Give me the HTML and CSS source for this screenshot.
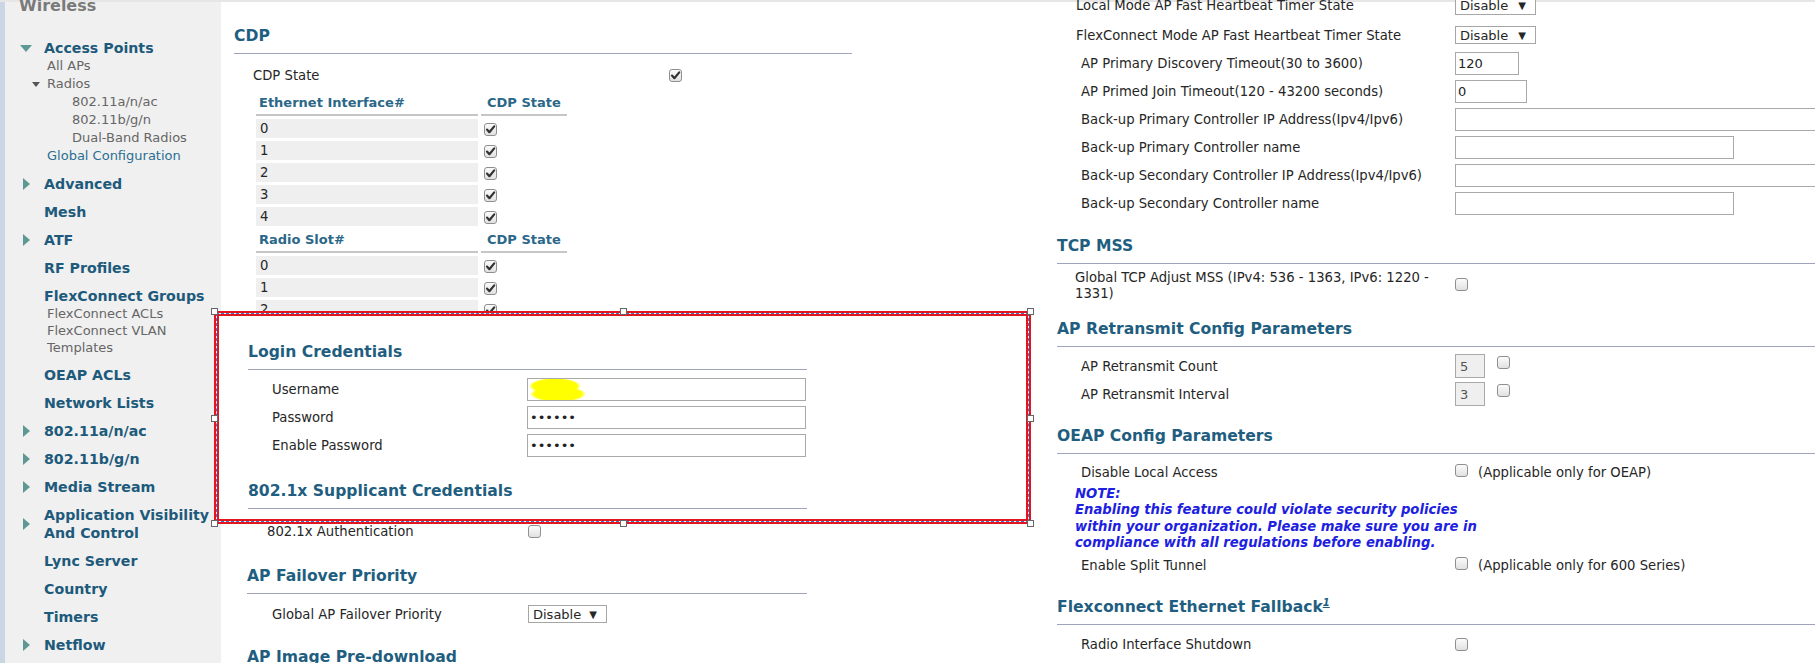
FILE: index.html
```html
<!DOCTYPE html>
<html lang="en">

<head>
    <meta charset="UTF-8">
    <meta name="viewport" content="width=device-width, initial-scale=1.0">
    <title>Wireless - Global Configuration</title>
    <link rel="stylesheet" href="styles.css">
</head>

<body>
    <div class="page">
        <div class="sidebar">
            <h2 class="side-title">Wireless</h2>
            <ul class="nav">
                <li>
                    <div class="nav-item"><span class="mk"><i class="tri-down"></i></span>Access Points</div>
                    <ul class="sub">
                        <li>All APs</li>
                        <li class="radios"><span class="mk-sm"><i class="tri-sm"></i></span>Radios</li>
                        <li class="deep">802.11a/n/ac</li>
                        <li class="deep">802.11b/g/n</li>
                        <li class="deep">Dual-Band Radios</li>
                        <li class="link">Global Configuration</li>
                    </ul>
                </li>
                <li><div class="nav-item"><span class="mk"><i class="tri-right"></i></span>Advanced</div></li>
                <li><div class="nav-item"><span class="mk"></span>Mesh</div></li>
                <li><div class="nav-item"><span class="mk"><i class="tri-right"></i></span>ATF</div></li>
                <li><div class="nav-item"><span class="mk"></span>RF Profiles</div></li>
                <li>
                    <div class="nav-item"><span class="mk"></span>FlexConnect Groups</div>
                    <ul class="sub tight">
                        <li>FlexConnect ACLs</li>
                        <li>FlexConnect VLAN<br>Templates</li>
                    </ul>
                </li>
                <li><div class="nav-item"><span class="mk"></span>OEAP ACLs</div></li>
                <li><div class="nav-item"><span class="mk"></span>Network Lists</div></li>
                <li><div class="nav-item"><span class="mk"><i class="tri-right"></i></span>802.11a/n/ac</div></li>
                <li><div class="nav-item"><span class="mk"><i class="tri-right"></i></span>802.11b/g/n</div></li>
                <li><div class="nav-item"><span class="mk"><i class="tri-right"></i></span>Media Stream</div></li>
                <li><div class="nav-item"><span class="mk"><i class="tri-right"></i></span>Application Visibility<br>And Control</div></li>
                <li><div class="nav-item"><span class="mk"></span>Lync Server</div></li>
                <li><div class="nav-item"><span class="mk"></span>Country</div></li>
                <li><div class="nav-item"><span class="mk"></span>Timers</div></li>
                <li><div class="nav-item"><span class="mk"><i class="tri-right"></i></span>Netflow</div></li>
            </ul>
        </div>

        <div class="main">
            <h3 class="sec-title cdp-title">CDP</h3>
            <div class="cdp-row">
                <span>CDP State</span>
                <span class="cb on"><svg viewBox="0 0 11 11"><path d="M2 5.6 L4.4 8.2 L9.2 2.4" /></svg></span>
            </div>
            <table class="cdp-table">
                <tr><th>Ethernet Interface#</th><th>CDP State</th></tr>
                <tr><td>0</td><td><span class="cb on"><svg viewBox="0 0 11 11"><path d="M2 5.6 L4.4 8.2 L9.2 2.4" /></svg></span></td></tr>
                <tr><td>1</td><td><span class="cb on"><svg viewBox="0 0 11 11"><path d="M2 5.6 L4.4 8.2 L9.2 2.4" /></svg></span></td></tr>
                <tr><td>2</td><td><span class="cb on"><svg viewBox="0 0 11 11"><path d="M2 5.6 L4.4 8.2 L9.2 2.4" /></svg></span></td></tr>
                <tr><td>3</td><td><span class="cb on"><svg viewBox="0 0 11 11"><path d="M2 5.6 L4.4 8.2 L9.2 2.4" /></svg></span></td></tr>
                <tr><td>4</td><td><span class="cb on"><svg viewBox="0 0 11 11"><path d="M2 5.6 L4.4 8.2 L9.2 2.4" /></svg></span></td></tr>
                <tr><th>Radio Slot#</th><th>CDP State</th></tr>
                <tr><td>0</td><td><span class="cb on"><svg viewBox="0 0 11 11"><path d="M2 5.6 L4.4 8.2 L9.2 2.4" /></svg></span></td></tr>
                <tr><td>1</td><td><span class="cb on"><svg viewBox="0 0 11 11"><path d="M2 5.6 L4.4 8.2 L9.2 2.4" /></svg></span></td></tr>
                <tr><td>2</td><td><span class="cb on"><svg viewBox="0 0 11 11"><path d="M2 5.6 L4.4 8.2 L9.2 2.4" /></svg></span></td></tr>
            </table>

            <div class="snip">
                <span class="hd tl"></span><span class="hd tc"></span><span class="hd tr"></span>
                <span class="hd ml"></span><span class="hd mr"></span>
                <span class="hd bl"></span><span class="hd bc"></span><span class="hd br"></span>
                <h3 class="sec-title">Login Credentials</h3>
                <div class="frow"><label>Username</label><input class="inp redact" type="text"></div>
                <div class="frow"><label>Password</label><input class="inp" type="password" value="xxxxxx"></div>
                <div class="frow"><label>Enable Password</label><input class="inp" type="password" value="xxxxxx"></div>
                <h3 class="sec-title sup-title">802.1x Supplicant Credentials</h3>
            </div>

            <div class="frow auth-row"><label>802.1x Authentication</label><span class="cb"></span></div>
            <h3 class="sec-title fail-title">AP Failover Priority</h3>
            <div class="frow"><label>Global AP Failover Priority</label><span class="sel">Disable <b>&#9660;</b></span></div>
            <h3 class="sec-title img-title">AP Image Pre-download</h3>
        </div>

        <div class="right">
            <div class="rrow top"><label class="i1">Local Mode AP Fast Heartbeat Timer State</label><span class="sel wide">Disable <b>&#9660;</b></span></div>
            <div class="rrow"><label class="i1">FlexConnect Mode AP Fast Heartbeat Timer State</label><span class="sel wide">Disable <b>&#9660;</b></span></div>
            <div class="rrow"><label class="i6">AP Primary Discovery Timeout(30 to 3600)</label><input class="inp w64" type="text" value="120"></div>
            <div class="rrow"><label class="i6">AP Primed Join Timeout(120 - 43200 seconds)</label><input class="inp w72" type="text" value="0"></div>
            <div class="rrow"><label class="i6">Back-up Primary Controller IP Address(Ipv4/Ipv6)</label><input class="inp long" type="text"></div>
            <div class="rrow"><label class="i6">Back-up Primary Controller name</label><input class="inp" type="text"></div>
            <div class="rrow"><label class="i6">Back-up Secondary Controller IP Address(Ipv4/Ipv6)</label><input class="inp long" type="text"></div>
            <div class="rrow"><label class="i6">Back-up Secondary Controller name</label><input class="inp" type="text"></div>

            <h3 class="sec-title tcp-title">TCP MSS</h3>
            <div class="rrow two"><label>Global TCP Adjust MSS (IPv4: 536 - 1363, IPv6: 1220 -<br>1331)</label><span class="cb"></span></div>

            <h3 class="sec-title rt-title">AP Retransmit Config Parameters</h3>
            <div class="rrow first"><label class="i6">AP Retransmit Count</label><span class="pair"><input class="inp off" type="text" value="5" disabled><span class="cb"></span></span></div>
            <div class="rrow"><label class="i6">AP Retransmit Interval</label><span class="pair"><input class="inp off" type="text" value="3" disabled><span class="cb"></span></span></div>

            <h3 class="sec-title oeap-title">OEAP Config Parameters</h3>
            <div class="rrow oeap-first"><label class="i6">Disable Local Access</label><span class="pair"><span class="cb"></span><span class="note-r">(Applicable only for OEAP)</span></span></div>
            <p class="note">NOTE:<br>Enabling this feature could violate security policies<br>within your organization. Please make sure you are in<br>compliance with all regulations before enabling.</p>
            <div class="rrow"><label class="i6">Enable Split Tunnel</label><span class="pair"><span class="cb"></span><span class="note-r">(Applicable only for 600 Series)</span></span></div>

            <h3 class="sec-title fb-title">Flexconnect Ethernet Fallback<sup>1</sup></h3>
            <div class="rrow first"><label class="i6">Radio Interface Shutdown</label><span class="cb"></span></div>
        </div>
    </div>
</body>

</html>
```

FILE: styles.css
```css
* {
    margin: 0;
    padding: 0;
}

html,
body {
    width: 1815px;
    height: 663px;
    overflow: hidden;
}

body {
    background-color: #fff;
    font-family: "DejaVu Sans", Verdana, sans-serif;
    font-size: 13.2px;
    color: #262626;
}

ul {
    list-style: none;
}

.page {
    display: grid;
    grid-template-columns: 221px 819px 775px;
    height: 661px;
    border-top: 2px solid #e6e6e6;
}

/* ---------- left menu ---------- */

.sidebar {
    background-color: #f0f0f0;
    border-left: 5px solid #cbd6e5;
}

.side-title {
    margin: -6px 0 0 14px;
    height: 20px;
    font-size: 16px;
    line-height: 20px;
    color: #7a7a7a;
}

.nav {
    margin-top: 18px;
    padding-left: 15px;
}

.nav > li {
    padding: 5px 0;
}

.nav-item {
    display: flex;
    align-items: center;
    font-size: 14.2px;
    font-weight: bold;
    line-height: 18px;
    color: #1d5a7b;
}

.mk {
    flex: none;
    width: 24px;
}

.tri-down {
    display: block;
    width: 0;
    height: 0;
    border-left: 6px solid transparent;
    border-right: 6px solid transparent;
    border-top: 7px solid #5c9a95;
}

.tri-right {
    display: block;
    width: 0;
    height: 0;
    margin-left: 3px;
    border-top: 6px solid transparent;
    border-bottom: 6px solid transparent;
    border-left: 7px solid #5f9893;
}

.sub {
    padding-left: 27px;
}

.sub li {
    font-size: 13px;
    line-height: 18px;
    color: #666;
}

.sub.tight li {
    line-height: 17px;
}

.sub .radios {
    display: flex;
    align-items: center;
    margin-left: -15px;
}

.mk-sm {
    flex: none;
    width: 15px;
}

.tri-sm {
    display: block;
    width: 0;
    height: 0;
    border-left: 4px solid transparent;
    border-right: 4px solid transparent;
    border-top: 5px solid #555;
}

.sub .deep {
    padding-left: 25px;
}

.sub .link {
    color: #2b6e92;
}

/* ---------- shared bits ---------- */

.sec-title {
    margin-left: 13px;
    width: 560px;
    padding-bottom: 7px;
    border-bottom: 1px solid #9da4bc;
    font-size: 15.6px;
    line-height: 20px;
    color: #1f5e80;
}

.cb {
    display: inline-block;
    width: 13px;
    height: 13px;
    box-sizing: border-box;
    border: 1px solid #8f8f8f;
    border-radius: 3px;
    background: linear-gradient(#fbfbfb, #e1e1e1);
    vertical-align: middle;
}

.cb svg {
    display: block;
    width: 11px;
    height: 11px;
}

.cb svg path {
    fill: none;
    stroke: #333;
    stroke-width: 2.2;
    stroke-linecap: round;
    stroke-linejoin: round;
}

.inp {
    width: 279px;
    height: 23px;
    box-sizing: border-box;
    border: 1px solid #a9a9a9;
    padding: 0 2px;
    font-family: "DejaVu Sans", Verdana, sans-serif;
    font-size: 13px;
    color: #222;
    background-color: #fff;
    outline: none;
}

.sel {
    display: inline-flex;
    align-items: center;
    justify-content: space-between;
    width: 79px;
    height: 18px;
    box-sizing: border-box;
    border: 1px solid #a6a6a6;
    padding: 0 9px 0 4px;
    font-size: 13px;
    background-color: #fff;
}

.sel b {
    font-size: 10px;
    font-weight: normal;
}

.frow {
    display: grid;
    grid-template-columns: 256px auto;
    align-items: center;
    height: 28px;
    margin-left: 13px;
    padding-left: 25px;
}

/* ---------- middle column ---------- */

.main {
    padding: 24px 0 0 13px;
}

.cdp-title {
    margin-left: 0;
    width: 618px;
}

.cdp-row {
    display: grid;
    grid-template-columns: 416px auto;
    align-items: center;
    height: 22px;
    margin: 10px 0 0 19px;
}

.cdp-table {
    margin: 3px 0 0 19px;
    border-collapse: separate;
    border-spacing: 3px;
}

.cdp-table th {
    padding: 0 4px 0 3px;
    line-height: 22px;
    border-bottom: 2px solid #c6c6c6;
    text-align: left;
    font-size: 13px;
    color: #2b6788;
}

.cdp-table th:first-child {
    width: 215px;
}

.cdp-table th:last-child {
    width: 76px;
    padding-left: 6px;
}

.cdp-table td {
    padding: 0 4px;
    line-height: 19px;
}

.cdp-table td:first-child {
    background-color: #efefef;
}

.cdp-table td .cb {
    margin-left: -1px;
}

.snip {
    position: relative;
    z-index: 2;
    width: 817px;
    height: 213px;
    box-sizing: border-box;
    margin: -11px 0 0 -20px;
    padding: 29px 0 0 32px;
    border: 2px solid #e3161f;
    box-shadow: inset 0 0 0 1px #fff, inset 0 0 0 3px #e3161f;
    background-color: #fff;
}

.snip::before {
    content: '';
    position: absolute;
    top: 0;
    right: 0;
    bottom: 0;
    left: 0;
    border: 1px dashed #3b78d8;
}

.snip .sec-title {
    margin-left: 0;
    width: 559px;
}

.snip .frow {
    grid-template-columns: 255px auto;
    margin-left: 0;
    padding-left: 24px;
}

.snip .frow:first-of-type {
    margin-top: 5px;
}

.snip .sup-title {
    margin-top: 22px;
}

.hd {
    position: absolute;
    width: 5px;
    height: 5px;
    border: 1px solid #666;
    background-color: #fff;
    z-index: 1;
}

.hd.tl { top: -5px; left: -5px; }
.hd.tc { top: -5px; left: calc(50% - 3px); }
.hd.tr { top: -5px; right: -5px; }
.hd.ml { top: calc(50% - 3px); left: -5px; }
.hd.mr { top: calc(50% - 3px); right: -5px; }
.hd.bl { bottom: -5px; left: -5px; }
.hd.bc { bottom: -5px; left: calc(50% - 3px); }
.hd.br { bottom: -5px; right: -5px; }

.redact {
    background-image:
        radial-gradient(26px 8px at 27px 7px, #ffff00 85%, rgba(255, 255, 0, 0) 100%),
        radial-gradient(28px 8px at 30px 15px, #ffff00 85%, rgba(255, 255, 0, 0) 100%);
    background-repeat: no-repeat;
}

.auth-row {
    grid-template-columns: 261px auto;
    height: 22px;
    margin-top: -4px;
    padding-left: 20px;
}

.fail-title {
    margin-top: 24px;
}

.fail-title + .frow {
    margin-top: 6px;
}

.img-title {
    margin-top: 19px;
}

/* ---------- right column ---------- */

.right {
    margin-top: -9px;
    padding-left: 17px;
}

.right .sec-title {
    margin-left: 0;
    width: auto;
}

.rrow {
    display: grid;
    grid-template-columns: 380px auto;
    align-items: center;
    height: 28px;
    padding-left: 18px;
    white-space: nowrap;
}

.rrow.top {
    margin-top: -3px;
    height: 31px;
}

.rrow .i1 {
    padding-left: 1px;
}

.rrow .i6 {
    padding-left: 6px;
}

.sel.wide {
    width: 81px;
}

.inp.w64 {
    width: 64px;
}

.inp.w72 {
    width: 72px;
}

.inp.long {
    width: 380px;
}

.inp.off {
    width: 30px;
    height: 24px;
    padding-left: 4px;
    color: #555;
    background-color: #efefef;
}

.pair {
    display: flex;
    align-items: center;
}

.pair .off + .cb {
    align-self: flex-start;
    margin: 2px 0 0 12px;
}

.pair > .cb:first-child {
    margin-bottom: 4px;
}

.note-r {
    margin-left: 10px;
}

.tcp-title {
    margin-top: 19px;
}

.rrow.two {
    height: auto;
    margin-top: 3px;
    padding-top: 3px;
    padding-bottom: 3px;
    line-height: 16px;
}

.rrow.two .cb {
    margin-bottom: 4px;
}

.rt-title {
    margin-top: 14px;
}

.rrow.first {
    margin-top: 5px;
}

.oeap-title {
    margin-top: 18px;
}

.rrow.oeap-first {
    margin-top: 4px;
}

.note {
    padding-left: 18px;
    font-weight: bold;
    font-style: italic;
    line-height: 16.3px;
    color: #2020e0;
}

.fb-title {
    margin-top: 18px;
}

.fb-title sup {
    font-size: 10px;
    font-style: italic;
    text-decoration: underline;
    vertical-align: 6px;
    line-height: 0;
}
```
